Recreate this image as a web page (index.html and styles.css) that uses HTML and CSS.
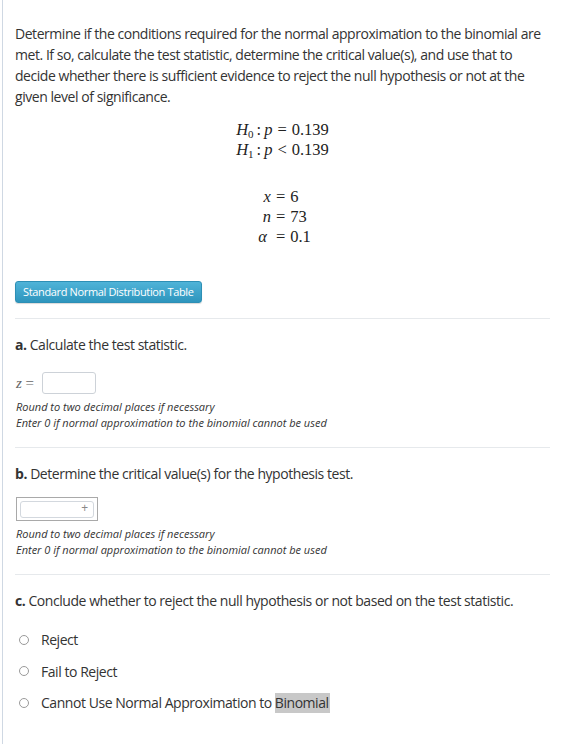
FILE: index.html
```html
<!DOCTYPE html>
<html>
<head>
<meta charset="utf-8">
<link rel="stylesheet" href="styles.css">
</head>
<body>
<div class="page">
  <p class="intro">Determine if the conditions required for the normal approximation to the binomial are met. If so, calculate the test statistic, determine the critical value(s), and use that to decide whether there is sufficient evidence to reject the null hypothesis or not at the given level of significance.</p>

  <div class="hyp">
    <div class="mrow"><i>H</i><sub>0</sub><span class="rel">:</span><i>p</i><span class="rel">=</span>0.139</div>
    <div class="mrow"><i>H</i><sub>1</sub><span class="rel">:</span><i>p</i><span class="rel">&lt;</span>0.139</div>
  </div>

  <div class="vars">
    <span class="vl"><i>x</i></span><span class="vr"><span class="rel">=</span>6</span>
    <span class="vl"><i>n</i></span><span class="vr"><span class="rel">=</span>73</span>
    <span class="vl"><i>α</i>&nbsp;</span><span class="vr"><span class="rel">=</span>0.1</span>
  </div>

  <div class="btnrow"><button class="btn">Standard Normal Distribution Table</button></div>

  <hr class="sep">

  <div class="q"><b>a.</b> Calculate the test statistic.</div>
  <div class="zrow"><span class="zlab"><i>z</i> =</span><span class="inp"></span></div>
  <div class="note">Round to two decimal places if necessary<br>Enter 0 if normal approximation to the binomial cannot be used</div>

  <hr class="sep">

  <div class="q"><b>b.</b> Determine the critical value(s) for the hypothesis test.</div>
  <div class="crit"><span class="critin"><span class="plus">+</span></span></div>
  <div class="note">Round to two decimal places if necessary<br>Enter 0 if normal approximation to the binomial cannot be used</div>

  <hr class="sep">

  <div class="q"><b>c.</b> Conclude whether to reject the null hypothesis or not based on the test statistic.</div>
  <ul class="opts">
    <li><span class="radio"></span>Reject</li>
    <li><span class="radio"></span>Fail to Reject</li>
    <li><span class="radio"></span>Cannot Use Normal Approximation to <span class="hl">Binomial</span></li>
  </ul>
</div>
</body>
</html>
```

FILE: styles.css
```css
html, body {
  margin: 0;
  padding: 0;
  background: #fff;
}
body {
  font-family: "Open Sans", "Liberation Sans", sans-serif;
  font-size: 14px;
  line-height: 21px;
  color: #333;
}
.page {
  margin-left: 2px;
  border-left: 1px solid #cfd8e3;
  padding: 23px 12px 0 12px;
  min-height: 721px;
}
.intro,
.q,
.opts {
  letter-spacing: -0.45px;
}
.intro {
  margin: 0;
}
.hyp {
  margin-top: 13px;
  display: flex;
  flex-direction: column;
  align-items: center;
  font-family: "Liberation Serif", "DejaVu Serif", serif;
  font-size: 16.5px;
  line-height: 20px;
  color: #222;
}
.mrow sub {
  font-size: 11px;
  vertical-align: -3px;
  line-height: 0;
}
.rel {
  margin: 0 5px;
}
.hyp .rel:first-of-type {
  margin: 0 3px;
}
.vars {
  margin-top: 27px;
  display: grid;
  grid-template-columns: auto auto;
  justify-content: center;
  font-family: "Liberation Serif", "DejaVu Serif", serif;
  font-size: 16.5px;
  line-height: 20px;
  color: #222;
  padding-left: 4px;
}
.vl { text-align: right; }
.vr { text-align: left; }
.btnrow {
  margin-top: 33px;
}
.btn {
  font-family: "Open Sans", "Liberation Sans", sans-serif;
  font-size: 11px;
  letter-spacing: -0.35px;
  color: #fff;
  height: 22px;
  padding: 0 7px;
  border: 1px solid #2d8fb5;
  border-radius: 3px;
  background: linear-gradient(#4fb3d8, #2e95bd);
  box-shadow: 0 1px 1px rgba(0,0,0,0.15);
  line-height: 20px;
}
.sep {
  border: 0;
  border-top: 1px solid #e6e9ec;
  margin: 15px 0 15px 0;
  height: 0;
}
.note + .sep {
  margin-top: 17px;
}
.q b {
  font-weight: 700;
}
.zrow {
  margin-top: 17px;
  display: flex;
  align-items: center;
  height: 22px;
}
.zlab {
  font-family: "Liberation Serif", "DejaVu Serif", serif;
  font-size: 15px;
  color: #666;
  width: 26px;
  padding-left: 1px;
}
.inp {
  width: 52px;
  height: 20px;
  border: 1px solid #cdd2d8;
  border-radius: 3px;
  background: #fff;
}
.note {
  margin-top: 5px;
  font-size: 11px;
  font-style: italic;
  line-height: 15.5px;
  color: #333;
  padding-left: 1px;
}
.crit {
  margin-top: 13px;
  margin-left: 1px;
  width: 80px;
  height: 22px;
  border: 1px solid #a9a9a9;
  display: flex;
  align-items: center;
  justify-content: center;
}
.critin {
  width: 72px;
  height: 15px;
  border: 1px solid #d3d8de;
  border-radius: 3px;
  position: relative;
}
.plus {
  position: absolute;
  right: 5px;
  top: -3px;
  font-size: 12px;
  line-height: 18px;
  color: #888;
}
.opts {
  list-style: none;
  margin: 18px 0 0 0;
  padding: 0;
}
.opts li {
  display: flex;
  align-items: center;
  height: 21px;
  margin-bottom: 10.5px;
}
.radio {
  width: 8px;
  height: 8px;
  border: 1px solid #9a9a9a;
  border-radius: 50%;
  margin-left: 4px;
  margin-right: 12px;
  background: #fff;
}
.hl {
  background: #c8c8c8;
  margin-left: 3px;
  padding-right: 1px;
  line-height: 20px;
}
```
